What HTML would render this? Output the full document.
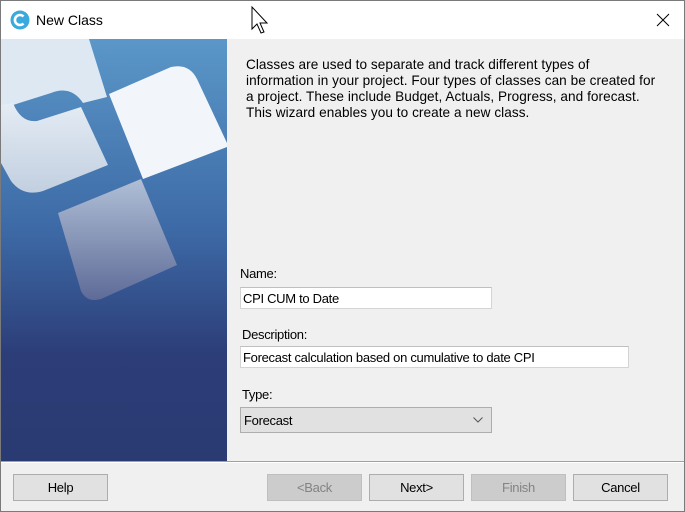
<!DOCTYPE html>
<html><head><meta charset="utf-8"><style>
*{box-sizing:border-box;margin:0;padding:0}
body{width:685px;height:512px;overflow:hidden;background:#f0f0f0;font-family:"Liberation Sans",sans-serif;position:relative}
.win{position:absolute;left:0;top:0;width:685px;height:512px;border:1px solid #7a7a7a;background:#f0f0f0}
.title{position:absolute;left:0;top:0;width:683px;height:38px;background:#fff}
.title .t{position:absolute;left:35px;top:11px;font-size:14px;color:#000}
.x{position:absolute;left:655px;top:12px}
.lp{position:absolute;left:0;top:38px;width:226px;height:422px}
.txt{position:absolute;left:245px;top:56px;font-size:13.6px;line-height:16px;color:#000;white-space:nowrap;letter-spacing:0.05px}
.lbl{position:absolute;font-size:13px;color:#000;letter-spacing:-0.3px}
.in{position:absolute;background:#fff;border:1px solid #d4d4d4;border-top-color:#bfbfbf;font-size:13px;padding:3px 0 0 2px;letter-spacing:-0.3px;color:#000}
.sel{position:absolute;background:#e1e1e1;border:1px solid #adadad;font-size:13px;padding:5px 0 0 3px;letter-spacing:-0.3px}
.sep{position:absolute;left:0;top:460px;width:683px;height:1px;background:#a0a0a0}
.sep2{position:absolute;left:0;top:461px;width:683px;height:1px;background:#fff}
.b{position:absolute;top:473px;width:95px;height:27px;background:#e1e1e1;border:1px solid #adadad;font-size:13px;text-align:center;line-height:25px;letter-spacing:-0.3px}
.d{background:#cccccc;border-color:#bfbfbf;color:#838383}
</style></head><body><div class="win">
<div class="title">
<svg style="position:absolute;left:9px;top:9px" width="20" height="20" viewBox="0 0 20 20"><circle cx="10" cy="10" r="9.5" fill="#39a9e0"/><path d="M13.5 6.5A5 5 0 1 0 13.5 13.5" stroke="#fff" stroke-width="2.6" fill="none"/></svg>
<span class="t">New Class</span>
<svg style="position:absolute;left:250px;top:5px" width="22" height="30" viewBox="0 0 22 30"><path d="M1 1 L1 23 L6 18 L10 27 L13 26 L9 17 L16 17 Z" fill="#fff" stroke="#000" stroke-width="1"/></svg>
<svg class="x" width="14" height="14" viewBox="0 0 14 14"><path d="M1 1L13 13M13 1L1 13" stroke="#000" stroke-width="1"/></svg>
</div>
<svg class="lp" width="226" height="422" viewBox="0 0 226 422">
<defs>
<linearGradient id="bg" x1="0" y1="0" x2="0" y2="1"><stop offset="0" stop-color="#5b97c8"/><stop offset="0.45" stop-color="#3d6aa6"/><stop offset="0.75" stop-color="#2c3d78"/><stop offset="1" stop-color="#2a3a72"/></linearGradient>
<linearGradient id="g2" x1="0" y1="0" x2="0" y2="1"><stop offset="0" stop-color="#e4ecf4"/><stop offset="1" stop-color="#c2cfe0"/></linearGradient>
<linearGradient id="g3" x1="0" y1="0" x2="0" y2="1"><stop offset="0" stop-color="#b0bfd6"/><stop offset="1" stop-color="#5e6b98"/></linearGradient>
</defs>
<rect width="226" height="422" fill="url(#bg)"/>
<path d="M0 0 L88 0 L106 58 L82 64 Q70 46 50 54 L12 66 L0 68 Z" fill="#dde8f2"/>
<path d="M0 66 L12 64 Q20 84 36 82 L80 68 L107 126 L42 152 Q22 158 10 142 L0 124 Z" fill="url(#g2)"/>
<path d="M108 55 L170 28 Q188 24 196 40 L226 104 L226 108 L142 140 Z" fill="#f2f6fa"/>
<path d="M57 174 L140 140 L176 226 L100 260 Q86 264 80 252 Z" fill="url(#g3)"/>
</svg>
<div class="txt">Classes are used to separate and track different types of<br>information in your project. Four types of classes can be created for<br>a project. These include Budget, Actuals, Progress, and forecast.<br>This wizard enables you to create a new class.</div>
<div class="lbl" style="left:239px;top:265px">Name:</div>
<div class="in" style="left:239px;top:286px;width:252px;height:22px">CPI CUM to Date</div>
<div class="lbl" style="left:241px;top:326px">Description:</div>
<div class="in" style="left:239px;top:345px;width:389px;height:22px">Forecast calculation based on cumulative to date CPI</div>
<div class="lbl" style="left:241px;top:386px">Type:</div>
<div class="sel" style="left:239px;top:406px;width:252px;height:26px">Forecast
<svg style="position:absolute;right:8px;top:9px" width="10" height="6" viewBox="0 0 10 6"><path d="M0.5 0.5L5 5L9.5 0.5" stroke="#555" fill="none"/></svg></div>
<div class="sep"></div><div class="sep2"></div>
<div class="b" style="left:12px">Help</div>
<div class="b d" style="left:266px">&lt;Back</div>
<div class="b" style="left:368px">Next&gt;</div>
<div class="b d" style="left:470px">Finish</div>
<div class="b" style="left:572px">Cancel</div>
</div></body></html>
